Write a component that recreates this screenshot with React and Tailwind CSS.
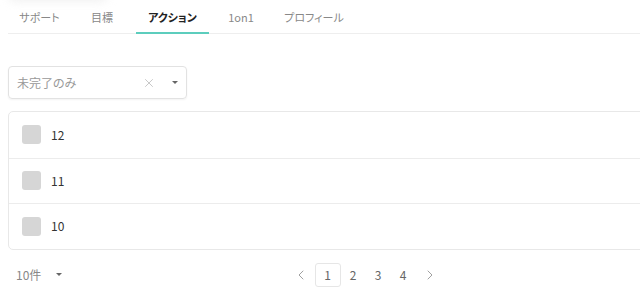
import React from 'react';
import { ChevronLeft, ChevronRight, X } from 'lucide-react';

const tabs = [
    { label: 'サポート', cls: 'w-[61px]' },
    { label: '目標', cls: 'w-[48px] ml-[8px]' },
    { label: 'アクション', cls: 'w-[73px] ml-[10px]' },
    { label: '1on1', cls: 'w-[46px] ml-[9px]' },
    { label: 'プロフィール', cls: 'w-[82px] ml-[9px]' },
];
const rows = ['12', '11', '10'];

const Caret = () => (
    <svg width="6" height="3" viewBox="0 0 6 3" className="fill-[#666]">
        <path d="M0 0h6L3 3z" />
    </svg>
);

export default function App() {
    return (
        <div className="relative w-[640px] h-[300px] overflow-hidden bg-white font-['Noto_Sans_CJK_JP','Noto_Sans',sans-serif] [font-feature-settings:'palt']">
            {/* faint blur at top-left */}
            <div className="absolute -top-3 left-2 w-[100px] h-[14px] rounded-full bg-[#f2f2f2] blur-[4px]" />
            <div className="relative w-[722px] pl-2">
                {/* Tabs */}
                <div className="flex pl-px border-b border-[#eeeeee] h-[34px]">
                    {tabs.map(t => (
                        <div
                            key={t.label}
                            className={`${t.cls} text-center pt-[8px] h-[34px] text-[11px] leading-[18px] ${t.label === 'アクション' ? 'font-bold text-[#222] border-b-2 border-[#5ccdbd]' : 'text-[#888]'}`}
                        >
                            {t.label}
                        </div>
                    ))}
                </div>

                {/* Filter select */}
                <div className="mt-[32px] w-[179px] h-[33px] rounded-[4px] border border-[#e2e2e2] shadow-[0_1px_2px_rgba(0,0,0,0.05)] flex items-center pl-[8px] pr-[8px]">
                    <span className="text-[12px] text-[#999] flex-1">未完了のみ</span>
                    <X size={14} strokeWidth={1.4} className="text-[#bbb] mr-[16px]" />
                    <Caret />
                </div>

                {/* List */}
                <div className="mt-[12px] rounded-[5px] border border-[#e8e8e8] overflow-hidden">
                    {rows.map((r, i) => (
                        <div key={r} className={`h-[45.5px] flex items-center pl-[13px] ${i > 0 ? 'border-t border-[#ececec]' : ''}`}>
                            <div className="w-[19px] h-[19px] rounded-[3px] bg-[#d6d6d6]" />
                            <span className="ml-[10px] text-[12px] text-[#333]">{r}</span>
                        </div>
                    ))}
                </div>

                {/* Footer */}
                <div className="relative h-[50px] flex items-center justify-center">
                    <div className="absolute left-[8px] top-0 h-full flex items-center">
                        <span className="text-[12px] text-[#888]">10件</span>
                        <span className="ml-[15px]"><Caret /></span>
                    </div>
                    <div className="flex items-center text-[12px] text-[#666]">
                        <ChevronLeft size={16} strokeWidth={1.2} className="text-[#888] mr-[6px]" />
                        <div className="w-[26px] h-[24px] rounded-[3px] border border-[#e6e6e6] flex items-center justify-center">1</div>
                        <div className="w-[25px] text-center">2</div>
                        <div className="w-[25px] text-center">3</div>
                        <div className="w-[25px] text-center">4</div>
                        <ChevronRight size={16} strokeWidth={1.2} className="text-[#888] ml-[6px]" />
                    </div>
                </div>
            </div>
        </div>
    );
}
